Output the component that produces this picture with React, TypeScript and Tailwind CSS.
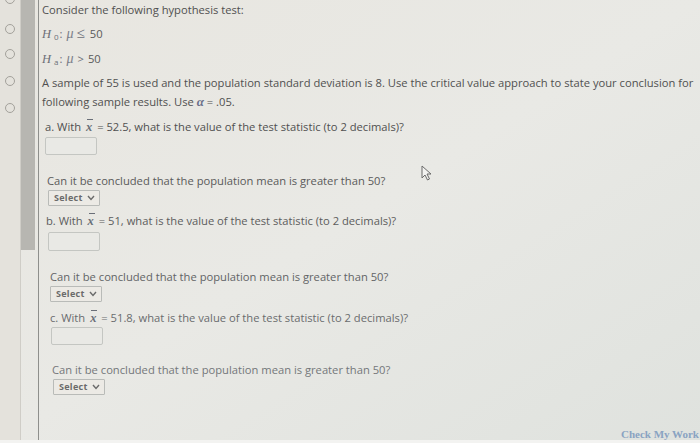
import React from "react";

const XBar = () => (
  <span className="relative inline-block font-['Liberation_Serif',serif] italic font-bold text-[12.5px] leading-[10px] text-[#6a6f78] mx-[2px]">
    x
    <span className="absolute left-[1px] top-[-3px] w-[6px] h-[1px] bg-[#6a6f78]" />
  </span>
);

const Select = ({ ml }: { ml: string }) => (
  <div className={`${ml} w-[52px] h-[16px] border border-[#b9bbb8] bg-[#eceae5] rounded-[1px] flex items-center pl-[5px] gap-[4px]`}>
    <span className="text-[9px] font-bold text-[#6b6b6b] tracking-[0.3px]">Select</span>
    <svg width="8" height="6" viewBox="0 0 8 6">
      <path d="M1 1 L4 4.5 L7 1" stroke="#6b6b6b" strokeWidth="1.4" fill="none" />
    </svg>
  </div>
);

const Box = ({ cls }: { cls: string }) => (
  <div className={`${cls} w-[52px] border border-[#c4c6c2] rounded-[2px] bg-[#e9e9e5]`} />
);

export default function App() {
  return (
    <div className="w-[700px] h-[443px] overflow-hidden relative bg-linear-to-br from-[#e8e6e0] via-[#e9e9e5] to-[#dfe2de] font-['Open_Sans',sans-serif] text-[11.2px] text-[#505050]">
      <div className="flex h-[440px]">
        {/* left radio strip */}
        <div className="w-[20px] h-full bg-[#e4e2dc] flex flex-col items-center">
          <div className="mt-[-6px] w-[10px] h-[10px] rounded-full border border-[#a3a19b]" />
          <div className="mt-[20px] w-[10px] h-[10px] rounded-full border border-[#a3a19b]" />
          <div className="mt-[15px] w-[10px] h-[10px] rounded-full border border-[#a3a19b]" />
          <div className="mt-[17px] w-[10px] h-[10px] rounded-full border border-[#a3a19b]" />
          <div className="mt-[17px] w-[10px] h-[10px] rounded-full border border-[#a3a19b]" />
        </div>
        <div className="w-[1px] h-full bg-[#cfcdc7]" />
        {/* gray bar */}
        <div className="w-[14px] h-[250px] bg-[#b7b6b1]" />
        <div className="w-[3px]" />
        <div className="w-[1px] h-full bg-[#8e8f8c]" />
        {/* content */}
        <div className="flex-1 flex flex-col pl-[3px] leading-[16px]">
          <div className="mt-[2px] whitespace-nowrap">Consider the following hypothesis test:</div>
          <div className="mt-[7px] whitespace-nowrap flex items-baseline text-[#6c6f78]">
            <span className="italic font-['Liberation_Serif',serif] text-[12.5px]">H</span>
            <span className="text-[8px] ml-[3px] relative top-[2px]">0</span>
            <span className="ml-[1px]">:</span>
            <span className="ml-[4px] italic font-['Liberation_Serif',serif] text-[14px] text-[#7a7f8a]">μ</span>
            <span className="ml-[3px] text-[15px] font-['Liberation_Serif',serif]">≤</span>
            <span className="ml-[5px] text-[#5a5a5a]">50</span>
          </div>
          <div className="mt-[8px] whitespace-nowrap flex items-baseline text-[#6c6f78]">
            <span className="italic font-['Liberation_Serif',serif] text-[12.5px]">H</span>
            <span className="text-[8px] ml-[3px] relative top-[2px]">a</span>
            <span className="ml-[1px]">:</span>
            <span className="ml-[4px] italic font-['Liberation_Serif',serif] text-[14px] text-[#7a7f8a]">μ</span>
            <span className="ml-[4px]">&gt;</span>
            <span className="ml-[4px] text-[#5a5a5a]">50</span>
          </div>
          <div className="mt-[7px] whitespace-nowrap">
            A sample of 55 is used and the population standard deviation is 8. Use the critical value approach to state your conclusion for
          </div>
          <div className="mt-[3px] whitespace-nowrap">
            following sample results. Use{" "}
            <span className="italic font-['Liberation_Serif',serif] font-bold text-[13px] text-[#6a6f8a]">α</span> = .05.
          </div>
          <div className="mt-[9px] ml-[3px] whitespace-nowrap">
            a. With <XBar /> = 52.5, what is the value of the test statistic (to 2 decimals)?
          </div>
          <Box cls="mt-[2px] ml-[3px] h-[18px]" />
          <div className="mt-[18px] ml-[5px] whitespace-nowrap text-[#5a5a5a]">
            Can it be concluded that the population mean is greater than 50?
          </div>
          <Select ml="mt-[1px] ml-[6px]" />
          <div className="mt-[7px] ml-[4px] whitespace-nowrap text-[#5c5c5c]">
            b. With <XBar /> = 51, what is the value of the test statistic (to 2 decimals)?
          </div>
          <Box cls="mt-[3px] ml-[6px] h-[19px]" />
          <div className="mt-[18px] ml-[8px] whitespace-nowrap text-[#626466]">
            Can it be concluded that the population mean is greater than 50?
          </div>
          <Select ml="mt-[1px] ml-[8px]" />
          <div className="mt-[8px] ml-[8px] whitespace-nowrap text-[#6a6c6e]">
            c. With <XBar /> = 51.8, what is the value of the test statistic (to 2 decimals)?
          </div>
          <Box cls="mt-[1px] ml-[9px] h-[18px]" />
          <div className="mt-[17px] ml-[10px] whitespace-nowrap text-[#74777a]">
            Can it be concluded that the population mean is greater than 50?
          </div>
          <Select ml="mt-[1px] ml-[11px]" />
        </div>
      </div>
      <div className="h-[3px] bg-[#f3f3f1]" />
      {/* Check My Work */}
      <div className="absolute right-[1px] bottom-[1px] font-['Liberation_Serif',serif] text-[11px] font-bold text-[#8aa3c2]">
        Check My Work
      </div>
      {/* cursor */}
      <svg className="absolute left-[421px] top-[165px]" width="12" height="17" viewBox="0 0 12 17">
        <path d="M1 1 L1 13 L4 10 L6.5 15 L8.5 14 L6 9 L10 9 Z" fill="#f2f2f0" stroke="#6a6a6a" strokeWidth="1" strokeLinejoin="round" />
      </svg>
    </div>
  );
}
